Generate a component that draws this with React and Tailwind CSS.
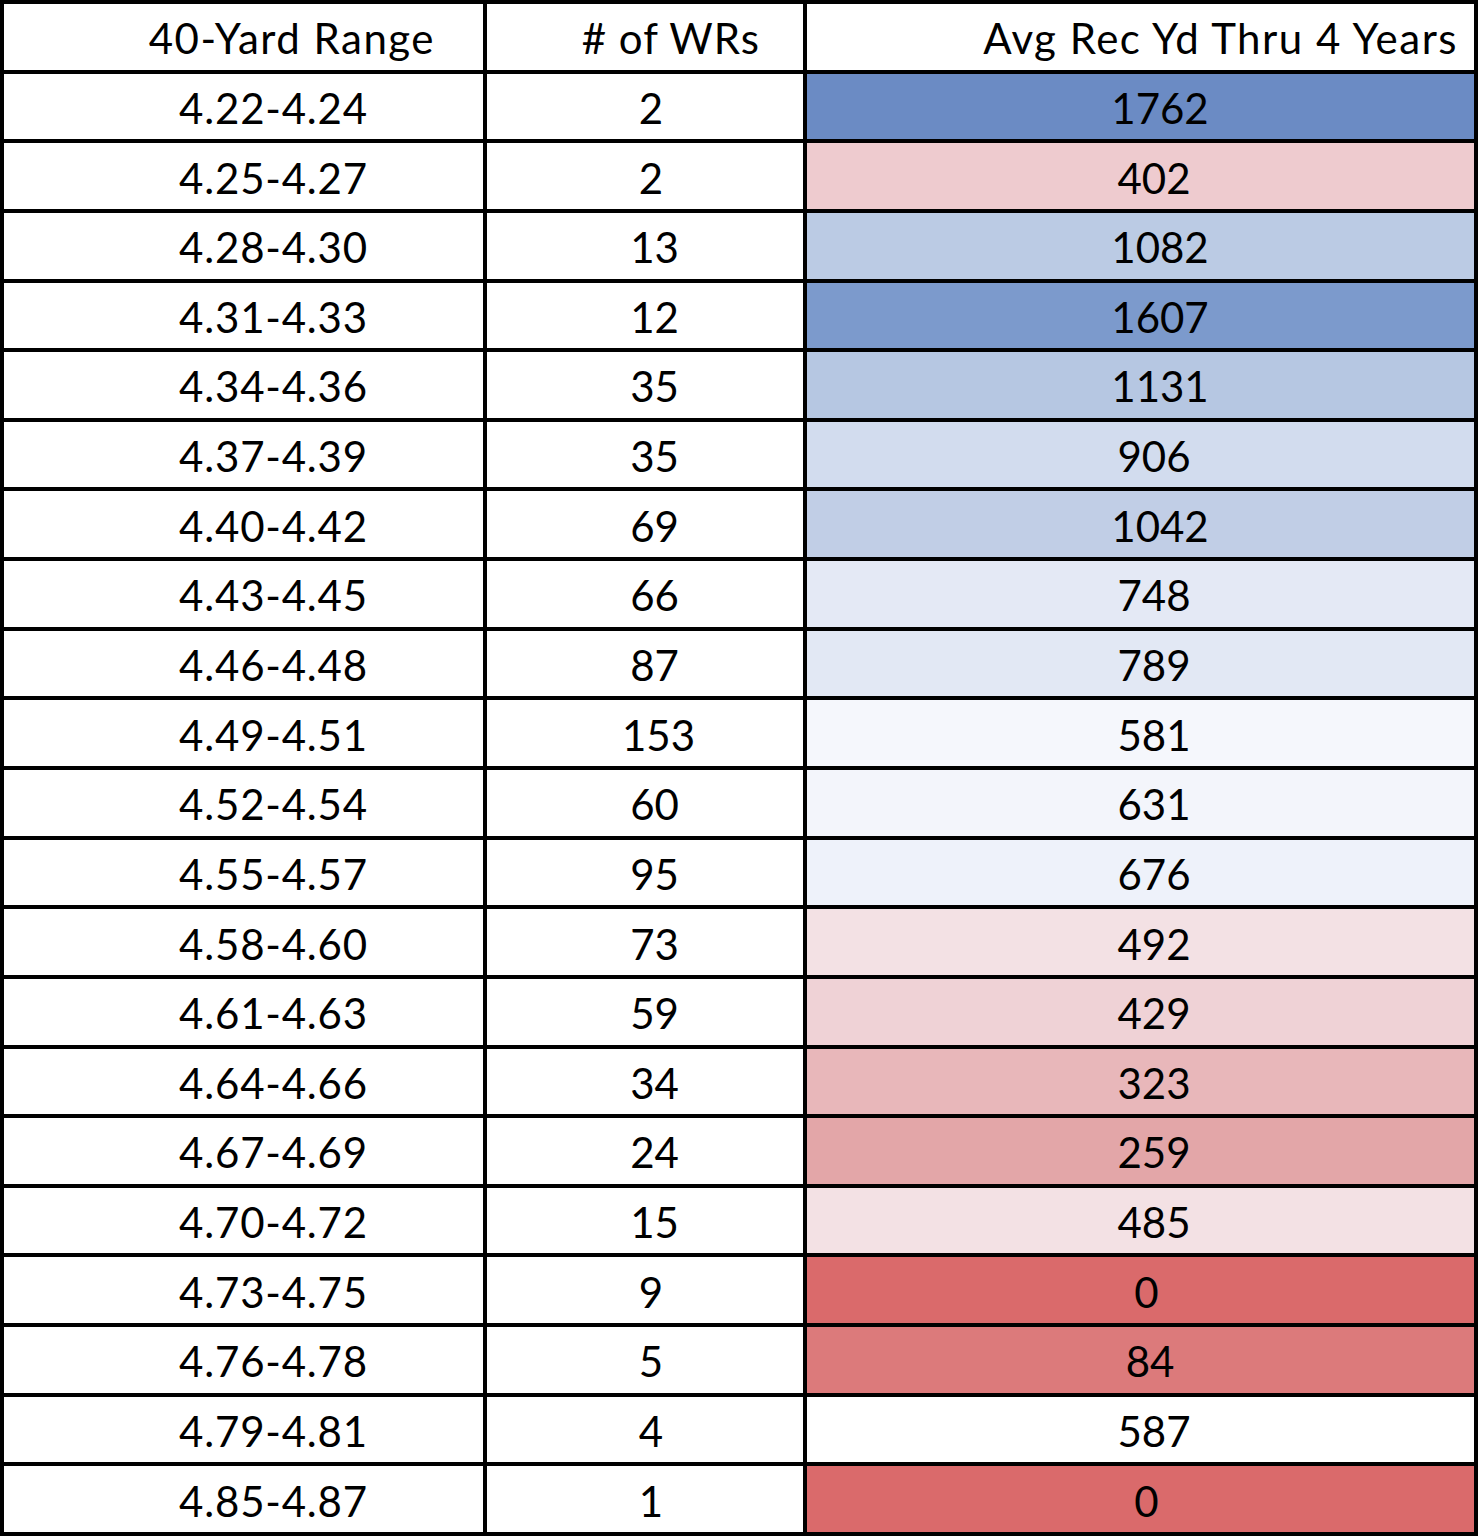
import React from "react";

const rows = [
  ["4.22-4.24", "2", "1762", "bg-[#6b8bc4]"],
  ["4.25-4.27", "2", "402", "bg-[#eecbcf]"],
  ["4.28-4.30", "13", "1082", "bg-[#bbcbe4]"],
  ["4.31-4.33", "12", "1607", "bg-[#7c9acc]"],
  ["4.34-4.36", "35", "1131", "bg-[#b6c7e2]"],
  ["4.37-4.39", "35", "906", "bg-[#d2dcee]"],
  ["4.40-4.42", "69", "1042", "bg-[#c1cee6]"],
  ["4.43-4.45", "66", "748", "bg-[#e4e9f5]"],
  ["4.46-4.48", "87", "789", "bg-[#e2e8f4]"],
  ["4.49-4.51", "153", "581", "bg-[#f5f7fc]"],
  ["4.52-4.54", "60", "631", "bg-[#f3f5fb]"],
  ["4.55-4.57", "95", "676", "bg-[#eef2fa]"],
  ["4.58-4.60", "73", "492", "bg-[#f3e1e4]"],
  ["4.61-4.63", "59", "429", "bg-[#efd2d6]"],
  ["4.64-4.66", "34", "323", "bg-[#e8b7ba]"],
  ["4.67-4.69", "24", "259", "bg-[#e3a6a8]"],
  ["4.70-4.72", "15", "485", "bg-[#f3e1e4]"],
  ["4.73-4.75", "9", "0", "bg-[#da6a6b]"],
  ["4.76-4.78", "5", "84", "bg-[#dc7a7b]"],
  ["4.79-4.81", "4", "587", "bg-white"],
  ["4.85-4.87", "1", "0", "bg-[#da6a6b]"],
];

// Excel-ish nudge: numbers sit a bit right of true centre, more so for longer ones
const nudge = {
  1: "pl-[12px]",
  2: "pl-[19px]",
  3: "pl-[27px]",
  4: "pl-[39px]",
};

const cell = "flex items-center justify-center pt-[3px] text-black leading-none";

export default function App() {
  return (
    <div
      className="grid h-[1536px] w-[1478px] grid-cols-[479px_316px_1fr] grid-rows-[repeat(22,1fr)] gap-[4px] bg-black p-[4px] text-[42px]"
      style={{ fontFamily: "Lato, 'Open Sans', sans-serif" }}
    >
      <div className={`${cell} justify-end bg-white pr-[48px] tracking-[1.5px]`}>40-Yard Range</div>
      <div className={`${cell} justify-end bg-white pr-[43px] tracking-[1px]`}># of WRs</div>
      <div className={`${cell} justify-end bg-white pr-[16px] tracking-[1.5px]`}>Avg Rec Yd Thru 4 Years</div>

      {rows.map(([range, count, yards, bg]) => (
        <React.Fragment key={range}>
          <div className={`${cell} bg-white pl-[60px] tracking-[0.8px]`}>{range}</div>
          <div className={`${cell} bg-white ${nudge[count.length]}`}>{count}</div>
          <div className={`${cell} ${bg} ${nudge[yards.length]}`}>{yards}</div>
        </React.Fragment>
      ))}
    </div>
  );
}
